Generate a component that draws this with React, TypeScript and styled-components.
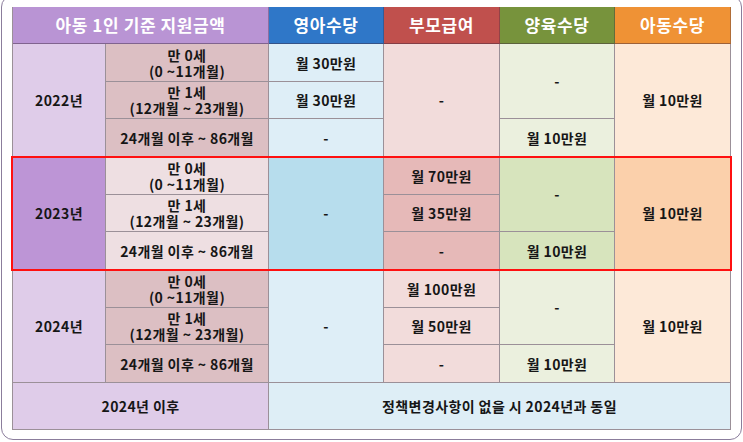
import styled, { createGlobalStyle } from "styled-components";

const GlobalStyle = createGlobalStyle`
  html, body {
    margin: 0;
    padding: 0;
    background: #ffffff;
  }
  body {
    font-family: "Noto Sans CJK KR", "Noto Sans", sans-serif;
    overflow: hidden;
  }
`;

const LINE = "#9b9098";
const COLS = "93px 163px 115px 116px 115px 116px";

type Tone = { year: string; age: string; infant: string; parent: string; home: string; child: string };

const soft: Tone = {
  year: "#dfcce9",
  age: "#dcbfc3",
  infant: "#deeef7",
  parent: "#f2dcdb",
  home: "#ebf0de",
  child: "#fde9d8",
};

const strong: Tone = {
  year: "#bd95d6",
  age: "#eedfe2",
  infant: "#b7dded",
  parent: "#e6b9b8",
  home: "#d7e4bd",
  child: "#fbd0ab",
};

const Frame = styled.div`
  box-sizing: border-box;
  width: 741px;
  height: 445px;
  margin: -5px 0 0 1px;
  padding: 11px 9px 0 10px;
  border: 1px solid #8b7d9c;
  border-radius: 12px;
`;

const Table = styled.div`
  display: flex;
  flex-direction: column;
  width: 719px;
`;

const HeaderRow = styled.div`
  display: grid;
  grid-template-columns: ${COLS};
  grid-template-rows: 37px;
  border-left: 1px solid ${LINE};
`;

const Group = styled.div<{ $highlight?: boolean }>`
  display: grid;
  grid-template-columns: ${COLS};
  grid-template-rows: 38px 37px 38px;
  border-left: 1px solid ${LINE};
  position: relative;
  z-index: ${(p) => (p.$highlight ? 1 : 0)};
  outline: ${(p) => (p.$highlight ? "2px solid #ff1010" : "none")};
  outline-offset: -1px;
`;

const FootRow = styled.div`
  display: grid;
  grid-template-columns: ${COLS};
  grid-template-rows: 47px;
  border-left: 1px solid ${LINE};
`;

const Cell = styled.div<{ $bg: string; $col: string; $row?: string }>`
  box-sizing: border-box;
  grid-column: ${(p) => p.$col};
  grid-row: ${(p) => p.$row ?? "auto"};
  background: ${(p) => p.$bg};
  border-right: 1px solid ${LINE};
  border-bottom: 1px solid ${LINE};
  display: flex;
  flex-direction: column;
  align-items: center;
  justify-content: center;
  text-align: center;
  color: #161616;
  font-size: 14px;
  font-weight: 700;
  line-height: 16px;
  letter-spacing: 0.4px;
  white-space: nowrap;
`;

const Line = styled.span`
  display: block;
  height: 16px;
  line-height: 16px;
`;

const HeadCell = styled(Cell)`
  color: #ffffff;
  font-size: 17px;
  line-height: 20px;
  letter-spacing: 0.6px;
  padding-bottom: 1px;
  border-right-color: rgba(60, 40, 60, 0.35);
  border-bottom-color: rgba(60, 40, 60, 0.45);
`;

const ages = [["만 0세", "(0 ~11개월)"], ["만 1세", "(12개월 ~ 23개월)"], ["24개월 이후 ~ 86개월"]];

type Value = string | string[];

function Column({ value, col, bg }: { value: Value; col: number; bg: string }) {
  if (typeof value === "string") {
    return (
      <Cell $bg={bg} $col={`${col}`} $row="1 / span 3">
        {value}
      </Cell>
    );
  }
  return (
    <>
      {value.map((v, i) => (
        <Cell key={i} $bg={bg} $col={`${col}`} $row={`${i + 1}`}>
          {v}
        </Cell>
      ))}
    </>
  );
}

function YearGroup({
  year,
  tone,
  infant,
  parent,
  highlight,
}: {
  year: string;
  tone: Tone;
  infant: Value;
  parent: Value;
  highlight?: boolean;
}) {
  return (
    <Group $highlight={highlight}>
      <Cell $bg={tone.year} $col="1" $row="1 / span 3">
        {year}
      </Cell>
      {ages.map((lines, i) => (
        <Cell key={i} $bg={tone.age} $col="2" $row={`${i + 1}`}>
          {lines.map((l) => (
            <Line key={l}>{l}</Line>
          ))}
        </Cell>
      ))}
      <Column value={infant} col={3} bg={tone.infant} />
      <Column value={parent} col={4} bg={tone.parent} />
      <Cell $bg={tone.home} $col="5" $row="1 / span 2">
        -
      </Cell>
      <Cell $bg={tone.home} $col="5" $row="3">
        월 10만원
      </Cell>
      <Column value="월 10만원" col={6} bg={tone.child} />
    </Group>
  );
}

export default function App() {
  return (
    <>
      <GlobalStyle />
      <Frame>
        <Table>
          <HeaderRow>
            <HeadCell $bg="#b994d4" $col="1 / span 2">
              아동 1인 기준 지원금액
            </HeadCell>
            <HeadCell $bg="#2f77c8" $col="3">영아수당</HeadCell>
            <HeadCell $bg="#c0504d" $col="4">부모급여</HeadCell>
            <HeadCell $bg="#77933c" $col="5">양육수당</HeadCell>
            <HeadCell $bg="#ef9235" $col="6">아동수당</HeadCell>
          </HeaderRow>

          <YearGroup year="2022년" tone={soft} infant={["월 30만원", "월 30만원", "-"]} parent="-" />
          <YearGroup year="2023년" tone={strong} infant="-" parent={["월 70만원", "월 35만원", "-"]} highlight />
          <YearGroup year="2024년" tone={soft} infant="-" parent={["월 100만원", "월 50만원", "-"]} />

          <FootRow>
            <Cell $bg="#dfcce9" $col="1 / span 2">2024년 이후</Cell>
            <Cell $bg="#deeef6" $col="3 / span 4">정책변경사항이 없을 시 2024년과 동일</Cell>
          </FootRow>
        </Table>
      </Frame>
    </>
  );
}
